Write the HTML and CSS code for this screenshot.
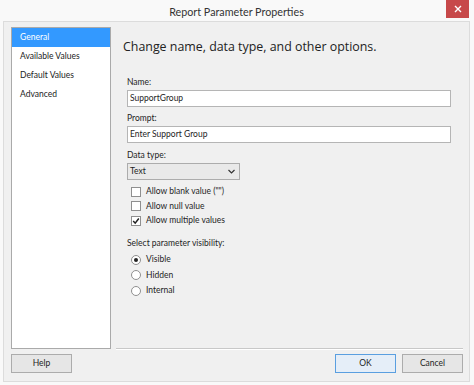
FILE: index.html
```html
<!DOCTYPE html>
<html>
<head>
<meta charset="utf-8">
<link rel="stylesheet" href="styles.css">
</head>
<body>
<div class="window">
  <div class="titlebar">
    <div class="title">Report Parameter Properties</div>
    <div class="close"><svg width="8" height="8" viewBox="0 0 8 8"><path d="M1 1L7 7M7 1L1 7" stroke="#fff" stroke-width="1.4"/></svg></div>
  </div>
  <div class="client">
    <div class="main">
      <div class="nav">
        <div class="nav-item selected">General</div>
        <div class="nav-item">Available Values</div>
        <div class="nav-item">Default Values</div>
        <div class="nav-item">Advanced</div>
      </div>
      <div class="panel">
        <div class="heading">Change name, data type, and other options.</div>
        <div class="label first">Name:</div>
        <div class="input">SupportGroup</div>
        <div class="label">Prompt:</div>
        <div class="input">Enter Support Group</div>
        <div class="label">Data type:</div>
        <div class="select"><span>Text</span><svg width="7" height="5" viewBox="0 0 7 5"><path d="M0.5 1L3.5 4L6.5 1" fill="none" stroke="#333" stroke-width="1.2"/></svg></div>
        <div class="checks">
          <div class="check"><span class="box"></span>Allow blank value ("")</div>
          <div class="check"><span class="box"></span>Allow null value</div>
          <div class="check"><span class="box"><svg width="8" height="8" viewBox="0 0 8 8"><path d="M1.2 4L3.2 6.2L6.8 1.5" fill="none" stroke="#222" stroke-width="1.5"/></svg></span>Allow multiple values</div>
        </div>
        <div class="label vis">Select parameter visibility:</div>
        <div class="radios">
          <div class="radio"><span class="circle on"></span>Visible</div>
          <div class="radio"><span class="circle"></span>Hidden</div>
          <div class="radio"><span class="circle"></span>Internal</div>
        </div>
      </div>
    </div>
    <div class="footer">
      <div class="btn">Help</div>
      <div class="spacer"></div>
      <div class="btn default">OK</div>
      <div class="btn">Cancel</div>
    </div>
  </div>
</div>
</body>
</html>
```
FILE: styles.css
```css
html, body {
  margin: 0;
  padding: 0;
  background: #ffffff;
}
body {
  font-family: "Lato", "Open Sans", sans-serif;
  font-size: 8.5px;
  color: #1e1e1e;
}
.window {
  width: 474px;
  height: 385px;
  display: flex;
  flex-direction: column;
  background: #f9f9f9;
  box-sizing: border-box;
  padding: 0 4px 3px 3px;
}
.titlebar {
  height: 21px;
  display: flex;
  align-items: center;
  justify-content: center;
  position: relative;
}
.title {
  font-size: 10.75px;
  color: #333;
  margin-top: 1px;
}
.close {
  position: absolute;
  right: 1px;
  top: 0;
  width: 23px;
  height: 18px;
  background: #c7494a;
  display: flex;
  align-items: center;
  justify-content: center;
}
.client {
  flex: 1;
  background: #f0f0f0;
  border: 1px solid #dcdcdc;
  display: flex;
  flex-direction: column;
  padding: 5px 6px 8px 7px;
}
.main {
  flex: 1;
  display: flex;
  gap: 5px;
}
.nav {
  width: 98px;
  background: #fff;
  border: 1px solid #aaa;
  padding-top: 0;
}
.nav-item {
  height: 19px;
  line-height: 19px;
  padding-left: 8px;
  color: #222;
  font-size: 8.5px;
}
.nav-item.selected {
  background: #3399ff;
  color: #fff;
}
.panel {
  flex: 1;
  border-bottom: 1px solid #c8c8c8;
  box-shadow: 0 1px 0 #fff;
  padding-left: 11px;
  padding-right: 12px;
  display: flex;
  flex-direction: column;
  align-items: flex-start;
}
.heading {
  font-family: "Open Sans", sans-serif;
  font-size: 12.4px;
  color: #222;
  margin-top: 10px;
  margin-left: -4px;
  height: 20px;
  line-height: 20px;
}
.label {
  margin-top: 6.5px;
  height: 11px;
  line-height: 11px;
}
.label.first {
  margin-top: 19.5px;
}
.input {
  align-self: stretch;
  height: 17px;
  box-sizing: border-box;
  background: #fff;
  border: 1px solid #b5b5b5;
  padding-left: 2px;
  line-height: 15px;
  margin-top: 2px;
}
.select {
  width: 113px;
  height: 17px;
  box-sizing: border-box;
  background: #e9e9e9;
  border: 1px solid #acacac;
  margin-top: 2px;
  display: flex;
  align-items: center;
  justify-content: space-between;
  padding: 0 4px 0 2px;
}
.checks {
  margin-top: 6.5px;
  margin-left: 4px;
  display: flex;
  flex-direction: column;
  gap: 3.5px;
}
.check, .radio {
  display: flex;
  align-items: center;
  height: 11px;
  line-height: 11px;
}
.box {
  width: 8px;
  height: 8px;
  border: 1px solid #8f8f8f;
  background: #fff;
  margin-right: 5px;
  display: flex;
  align-items: center;
  justify-content: center;
}
.label.vis {
  margin-top: 12px;
}
.radios {
  margin-top: 5px;
  margin-left: 4px;
  display: flex;
  flex-direction: column;
  gap: 4.5px;
}
.circle {
  width: 8px;
  height: 8px;
  border: 1px solid #8f8f8f;
  border-radius: 50%;
  background: #fff;
  margin-right: 5px;
  display: flex;
  align-items: center;
  justify-content: center;
}
.circle.on::after {
  content: "";
  width: 4px;
  height: 4px;
  border-radius: 50%;
  background: #222;
}
.footer {
  display: flex;
  gap: 6px;
  margin-top: 5px;
  height: 19px;
}
.spacer {
  flex: 1;
}
.btn {
  width: 61px;
  box-sizing: border-box;
  height: 19px;
  border: 1px solid #acacac;
  background: #e6e6e6;
  text-align: center;
  line-height: 17px;
}
.btn.default {
  border-color: #5a9fe0;
  background: #e5eef8;
}
```
